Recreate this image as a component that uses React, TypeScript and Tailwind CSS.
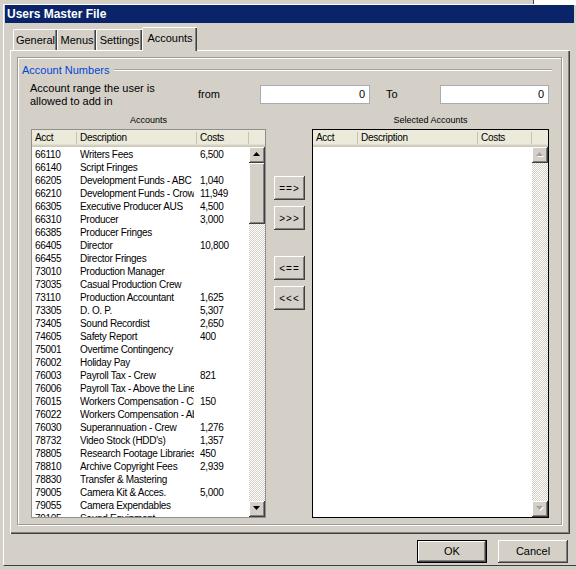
import React from "react";

type Row = [string, string, string];

const rows: Row[] = [
  ["66110", "Writers Fees", "6,500"],
  ["66140", "Script Fringes", ""],
  ["66205", "Development Funds - ABC", "1,040"],
  ["66210", "Development Funds - Crow", "11,949"],
  ["66305", "Executive Producer AUS", "4,500"],
  ["66310", "Producer", "3,000"],
  ["66385", "Producer Fringes", ""],
  ["66405", "Director", "10,800"],
  ["66455", "Director Fringes", ""],
  ["73010", "Production Manager", ""],
  ["73035", "Casual Production Crew", ""],
  ["73110", "Production Accountant", "1,625"],
  ["73305", "D. O. P.", "5,307"],
  ["73405", "Sound Recordist", "2,650"],
  ["74605", "Safety Report", "400"],
  ["75001", "Overtime Contingency", ""],
  ["76002", "Holiday Pay", ""],
  ["76003", "Payroll Tax - Crew", "821"],
  ["76006", "Payroll Tax - Above the Line", ""],
  ["76015", "Workers Compensation - Crew", "150"],
  ["76022", "Workers Compensation - Above the Line", ""],
  ["76030", "Superannuation - Crew", "1,276"],
  ["78732", "Video Stock (HDD's)", "1,357"],
  ["78805", "Research Footage Libraries", "450"],
  ["78810", "Archive Copyright Fees", "2,939"],
  ["78830", "Transfer & Mastering", ""],
  ["79005", "Camera Kit & Acces.", "5,000"],
  ["79055", "Camera Expendables", ""],
  ["79105", "Sound Equipment", ""],
];

const raised =
  "bg-[#d4d0c8] shadow-[inset_-1px_-1px_0_#404040,inset_1px_1px_0_#ffffff,inset_-2px_-2px_0_#808080,inset_2px_2px_0_#d4d0c8]";

const Arrow = ({ up, disabled }: { up: boolean; disabled?: boolean }) => {
  const d = up ? "M3.5 0L7 4H0z" : "M0 0H7L3.5 4z";
  return (
    <svg width="9" height="6" viewBox="0 0 9 6">
      {disabled && <path d={d} transform="translate(1 1)" fill="#ffffff" />}
      <path d={d} fill={disabled ? "#a0a0a0" : "#000000"} />
    </svg>
  );
};

const ScrollButton = ({ up, disabled }: { up: boolean; disabled?: boolean }) => (
  <div className={`w-[16px] h-[16px] flex items-center justify-center ${raised}`}>
    <Arrow up={up} disabled={disabled} />
  </div>
);

const Track = () => (
  <div className="flex-1 bg-[image:repeating-conic-gradient(#ffffff_0_25%,#d4d0c8_0_50%)] bg-[length:2px_2px]" />
);

const HeaderCell = ({ w, label }: { w: string; label?: string }) => (
  <div className={`${w} h-full flex items-center`}>
    <span className="flex-1 pl-[3px] pb-[2px]">{label}</span>
    <div className="w-px h-[12px] mb-[2px] bg-[#c5c2b2]" />
  </div>
);

const ListBox = ({ data, selected }: { data: Row[]; selected?: boolean }) => (
  <div
    className={`h-[389px] bg-white border flex flex-col ${
      selected ? "w-[237px] border-black" : "w-[235px] border-[#8f8f8f]"
    }`}
  >
    <div className="h-[17px] flex bg-[#ebeadb] shadow-[inset_0_-1px_0_#cbc7b8,inset_0_-2px_0_#d6d2c2,inset_0_-3px_0_#e2decd] text-[10px] tracking-[-0.3px] text-black">
      <HeaderCell w="w-[45px]" label="Acct" />
      <HeaderCell w="w-[120px]" label="Description" />
      <HeaderCell w={selected ? "w-[54px]" : "w-[52px]"} label="Costs" />
      <div className="flex-1" />
    </div>
    <div className="flex flex-1 min-h-0">
      <div className="flex-1 overflow-hidden pt-[1px]">
        {data.map(([acct, desc, cost]) => (
          <div key={acct} className="flex h-[13px] leading-[13px] text-[10px] tracking-[-0.3px] text-black whitespace-nowrap">
            <div className="w-[45px] pl-[3px]">{acct}</div>
            <div className="w-[120px] pl-[3px]">
              <div className="w-[114px] overflow-hidden">{desc}</div>
            </div>
            <div className="pl-[3px]">{cost}</div>
          </div>
        ))}
      </div>
      {selected ? (
        <div className="w-[16px] flex flex-col">
          <ScrollButton up disabled />
          <Track />
          <ScrollButton up={false} disabled />
        </div>
      ) : (
        <div className="w-[16px] flex flex-col">
          <ScrollButton up />
          <div className={`h-[61px] ${raised}`} />
          <Track />
          <ScrollButton up={false} />
        </div>
      )}
    </div>
  </div>
);

const MoveButton = ({ label, className = "" }: { label: string; className?: string }) => (
  <div className={`w-[31px] h-[24px] flex items-center justify-center text-[10px] tracking-[1px] ${raised} ${className}`}>
    {label}
  </div>
);

const Tab = ({ w, label, active }: { w: string; label: string; active?: boolean }) => (
  <div
    className={`${w} ${
      active ? "h-[24px] -mb-px relative z-10 pb-[2px]" : "h-[21px]"
    } bg-[#d4d0c8] border-t border-l border-white rounded-tl-[2px] shadow-[inset_-1px_0_0_#404040,inset_-2px_0_0_#808080] flex items-center justify-center text-[11px]`}
  >
    {label}
  </div>
);

export default function App() {
  return (
    <div className="w-[576px] h-[570px] bg-[#d4d0c8] overflow-hidden font-['Liberation_Sans',Arial,sans-serif] text-black">
      {/* desktop strip behind the window */}
      <div className="h-[4px] flex">
        <div className="w-[533px] bg-[#d4d0c8]" />
        <div className="flex-1 border-l border-[#404040] bg-white" />
      </div>

      <div className="ml-[3px] w-[573px] h-[562px] border-l border-t border-white border-b border-b-[#404040] flex flex-col">
        {/* title bar */}
        <div className="ml-[1px] w-[569px] h-[18px] bg-[#0a246a] text-white font-bold text-[12px] leading-[18px] pl-[2px]">
          Users Master File
        </div>

        {/* tabs */}
        <div className="mt-[4px] ml-[9px] h-[23px] flex items-end">
          <Tab w="w-[44px]" label="General" />
          <Tab w="w-[39px]" label="Menus" />
          <Tab w="w-[46px]" label="Settings" />
          <Tab w="w-[55px]" label="Accounts" active />
        </div>

        {/* tab page */}
        <div className="ml-[6px] w-[560px] h-[484px] border-t border-l border-white shadow-[inset_-1px_-1px_0_#404040,inset_-2px_-2px_0_#808080] pt-[6px] pl-[6px]">
          <div className="w-[545px] h-[468px] border border-[#9d9a93] shadow-[inset_1px_1px_0_#ffffff,1px_1px_0_#ffffff] flex flex-col">
            {/* group header */}
            <div className="mt-[6px] pl-[4px] h-[12px] flex items-center">
              <span className="text-[11px] leading-[12px] text-[#0046d5]">Account Numbers</span>
              <div className="flex-1 ml-[5px] mr-[9px] h-[2px] border-t border-[#a6a39b] border-b border-b-white" />
            </div>

            {/* range row */}
            <div className="mt-[9px] pl-[12px] h-[19px] flex items-center text-[11px]">
              <div className="w-[168px] leading-[13px] pt-[1px]">
                Account range the user is
                <br />
                allowed to add in
              </div>
              <div className="w-[62px]">from</div>
              <div className="w-[110px] h-[19px] bg-white border border-[#a5acb5] flex items-center justify-end pr-[4px]">0</div>
              <div className="ml-[16px] w-[54px]">To</div>
              <div className="w-[109px] h-[19px] bg-white border border-[#a5acb5] flex items-center justify-end pr-[4px]">0</div>
            </div>

            {/* lists */}
            <div className="mt-[10px] flex items-start">
              <div className="ml-[13px] flex flex-col">
                <div className="h-[12px] leading-[12px] text-[9px] text-center">Accounts</div>
                <div className="mt-[3px]">
                  <ListBox data={rows} />
                </div>
              </div>

              <div className="ml-[8px] pt-[62px] flex flex-col">
                <MoveButton label="==>" />
                <MoveButton label=">>>" className="mt-[6px]" />
                <MoveButton label="<==" className="mt-[26px]" />
                <MoveButton label="<<<" className="mt-[6px]" />
              </div>

              <div className="ml-[7px] flex flex-col">
                <div className="h-[12px] leading-[12px] text-[9px] text-center">Selected Accounts</div>
                <div className="mt-[3px]">
                  <ListBox data={[]} selected />
                </div>
              </div>
            </div>
          </div>
        </div>

        {/* dialog buttons */}
        <div className="mt-[6px] pr-[8px] flex justify-end gap-[11px] text-[11px]">
          <div className="w-[70px] h-[23px] border border-black flex items-center justify-center bg-[#d4d0c8] shadow-[inset_-1px_-1px_0_#404040,inset_1px_1px_0_#ffffff,inset_-2px_-2px_0_#808080]">
            OK
          </div>
          <div className={`w-[70px] h-[23px] flex items-center justify-center ${raised}`}>Cancel</div>
        </div>
      </div>
    </div>
  );
}
